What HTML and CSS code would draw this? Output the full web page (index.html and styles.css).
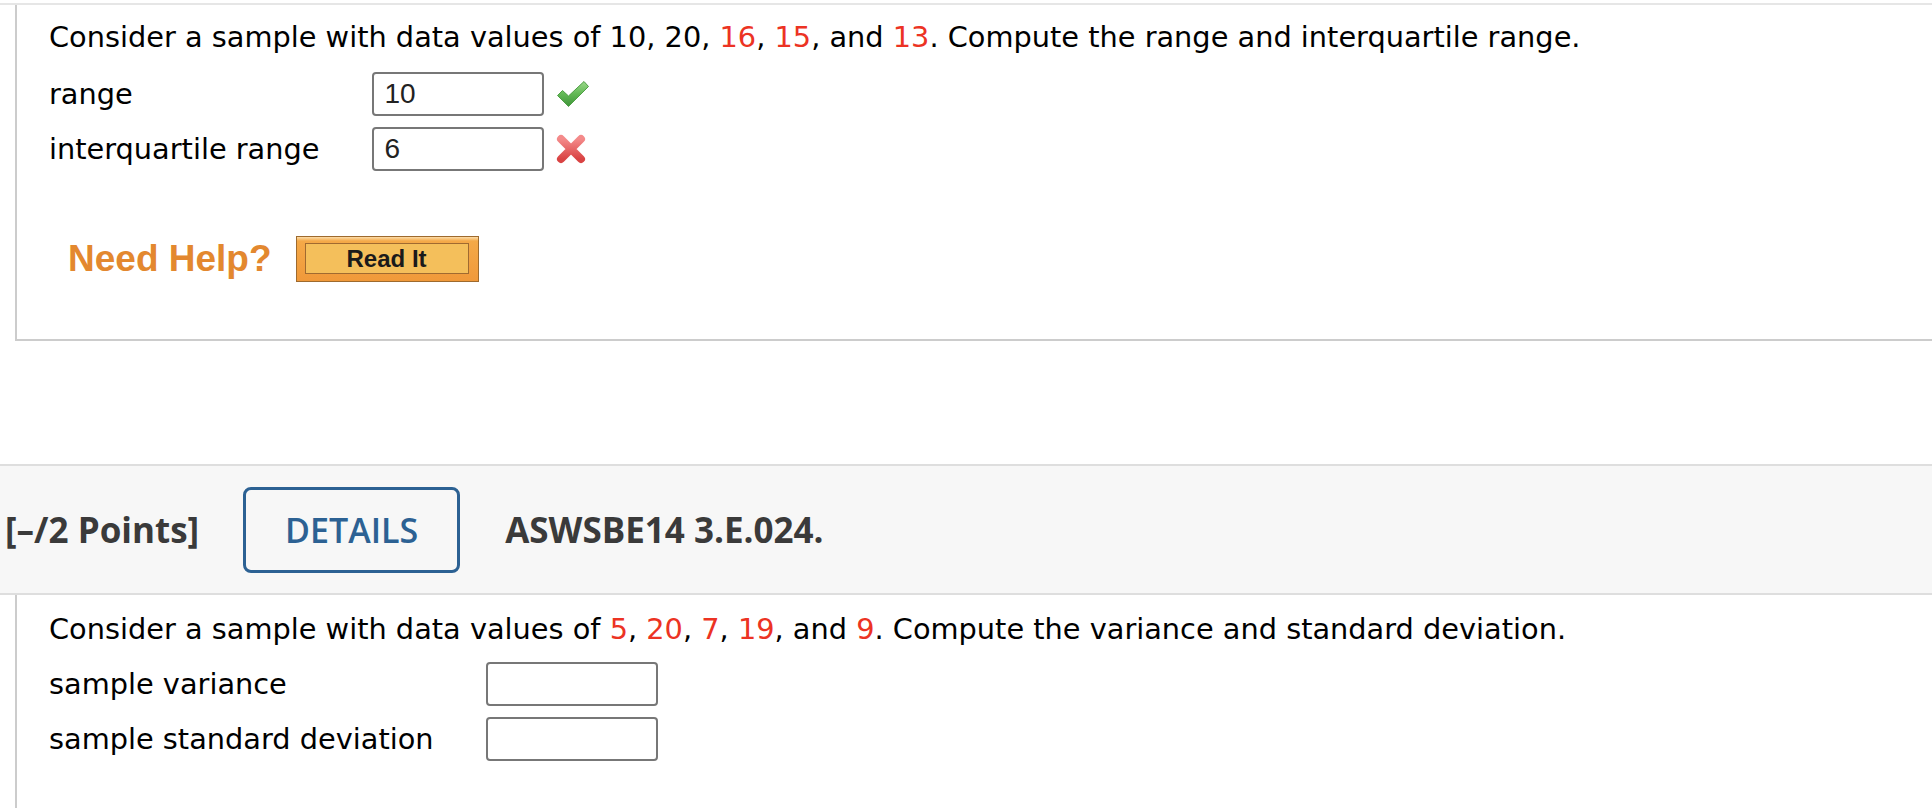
FILE: index.html
```html
<!DOCTYPE html>
<html lang="en">
<head>
<meta charset="utf-8">
<title>Question</title>
<link rel="stylesheet" href="styles.css">
</head>
<body>
<div class="top-rule"></div>
<section class="qbox first">
  <p class="qtext">Consider a sample with data values of 10, 20, <span class="red">16</span>, <span class="red">15</span>, and <span class="red">13</span>. Compute the range and interquartile range.</p>
  <div class="answers">
    <span class="label">range</span>
    <span class="field">10</span>
    <span class="mark">
      <svg width="34" height="28" viewBox="0 0 34 28">
        <defs>
          <linearGradient id="gck" x1="0" y1="0" x2="0" y2="1">
            <stop offset="0" stop-color="#9ad98a"/>
            <stop offset="0.5" stop-color="#62b855"/>
            <stop offset="1" stop-color="#3f943a"/>
          </linearGradient>
        </defs>
        <path d="M1.5 15.5 L6.5 10.5 L12.5 16 L28 1.5 L32.5 6.5 L12.5 26.5 Z" fill="url(#gck)" stroke="#4f9f45" stroke-width="1" stroke-linejoin="round"/>
      </svg>
    </span>
    <span class="label">interquartile range</span>
    <span class="field">6</span>
    <span class="mark">
      <svg width="30" height="30" viewBox="0 0 30 30">
        <defs>
          <linearGradient id="gx" x1="0" y1="0" x2="0" y2="1">
            <stop offset="0" stop-color="#f48a8a"/>
            <stop offset="1" stop-color="#d94343"/>
          </linearGradient>
        </defs>
        <path d="M5 5 L25 25 M25 5 L5 25" stroke="url(#gx)" stroke-width="8" stroke-linecap="round" fill="none"/>
      </svg>
    </span>
  </div>
  <div class="help">
    <span class="need">Need Help?</span>
    <span class="readit"><span class="readit-inner">Read It</span></span>
  </div>
</section>

<header class="qhead">
  <span class="points">[–/2 Points]</span>
  <span class="details">DETAILS</span>
  <span class="qid">ASWSBE14 3.E.024.</span>
</header>

<section class="qbox second">
  <p class="qtext">Consider a sample with data values of <span class="red">5</span>, <span class="red">20</span>, <span class="red">7</span>, <span class="red">19</span>, and <span class="red">9</span>. Compute the variance and standard deviation.</p>
  <div class="answers">
    <span class="label">sample variance</span>
    <span class="field"></span>
    <span class="mark"></span>
    <span class="label">sample standard deviation</span>
    <span class="field"></span>
    <span class="mark"></span>
  </div>
</section>
</body>
</html>
```

FILE: styles.css
```css
html, body {
  margin: 0;
  padding: 0;
  background: #ffffff;
}
body {
  width: 1932px;
  height: 808px;
  overflow: hidden;
  font-family: "DejaVu Sans", Verdana, sans-serif;
  color: #000;
}
.top-rule {
  margin-top: 3px;
  height: 2px;
  background: #e6e6e6;
}
.qbox {
  margin-left: 15px;
  border-left: 2px solid #cccccc;
  padding-left: 32px;
}
.qbox.first {
  border-bottom: 2px solid #cccccc;
  padding-top: 12px;
  padding-bottom: 57px;
}
.qbox.second {
  padding-top: 14px;
  height: 199px;
  overflow: hidden;
}
.qtext {
  margin: 0;
  font-size: 28.8px;
  line-height: 40px;
  white-space: nowrap;
}
.red {
  color: #ec3323;
}
.answers {
  display: grid;
  grid-template-columns: max-content max-content max-content;
  column-gap: 52px;
  row-gap: 11px;
  align-items: center;
  margin-top: 15px;
}
.second .answers {
  margin-top: 13px;
}
.label {
  font-size: 28.8px;
  line-height: 40px;
}
.field {
  box-sizing: border-box;
  width: 172px;
  height: 44px;
  border: 2px solid #777777;
  border-radius: 4px;
  background: #fff;
  font-family: "Liberation Sans", Arial, sans-serif;
  font-size: 28px;
  line-height: 40px;
  padding-left: 11px;
  color: #222;
}
.mark {
  margin-left: -40px;
  display: flex;
  align-items: center;
  width: 40px;
}
.help {
  display: flex;
  align-items: center;
  gap: 24px;
  margin-top: 65px;
  margin-left: 19px;
}
.need {
  font-family: "Liberation Sans", Arial, sans-serif;
  font-weight: bold;
  font-size: 37px;
  color: #e3882f;
  line-height: 46px;
}
.readit {
  box-sizing: border-box;
  width: 183px;
  height: 46px;
  border: 1px solid #9e6a2e;
  background: linear-gradient(#fcdca8 0, #f4a948 4px, #f0993a 100%);
  padding: 6px 9px 7px 8px;
  display: flex;
}
.readit-inner {
  flex: 1;
  border: 1px solid #a06a30;
  background: #f4bf5b;
  display: flex;
  align-items: center;
  justify-content: center;
  font-family: "Liberation Sans", Arial, sans-serif;
  font-weight: bold;
  font-size: 24px;
  color: #1a1a1a;
}
.qhead {
  margin-top: 123px;
  box-sizing: border-box;
  height: 131px;
  border-top: 2px solid #dedede;
  border-bottom: 2px solid #dedede;
  background: #f7f7f7;
  display: flex;
  align-items: center;
  padding-left: 5px;
  font-family: "Open Sans", sans-serif;
}
.points {
  font-weight: 700;
  font-size: 35px;
  color: #3a3a3a;
}
.details {
  box-sizing: border-box;
  margin-left: 44px;
  width: 217px;
  height: 86px;
  border: 3px solid #2c6193;
  border-radius: 8px;
  display: flex;
  align-items: center;
  justify-content: center;
  font-weight: 600;
  font-size: 34px;
  color: #2c6193;
}
.qid {
  margin-left: 45px;
  font-weight: 700;
  font-size: 35px;
  color: #3a3a3a;
}
```
